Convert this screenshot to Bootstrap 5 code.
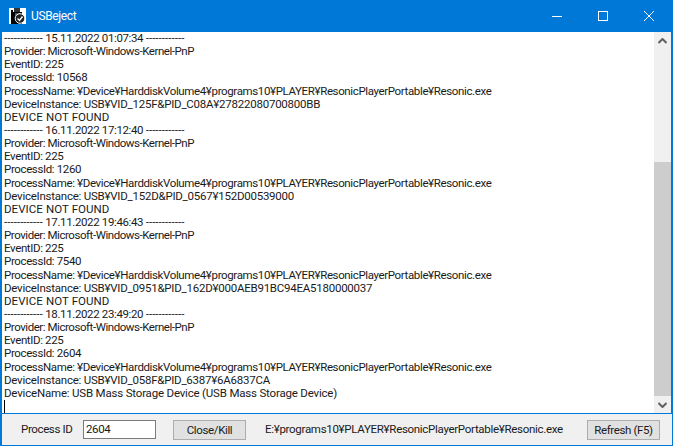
<!DOCTYPE html>
<html><head><meta charset="utf-8">
<link href="https://cdn.jsdelivr.net/npm/bootstrap@5.3.0/dist/css/bootstrap.min.css" rel="stylesheet">
<style>
html,body{margin:0;height:446px;overflow:hidden;background:#0078d7;font-family:Roboto,"Liberation Sans",Arial,sans-serif;}
.app-win{height:446px;width:673px;background:#0078d7;padding:0 2px 1px 2px;color:#1a1a1a;font-size:11.5px;letter-spacing:-.37px;}
.app-title{height:32px;color:#fff;font-size:12px;letter-spacing:-.36px;margin-left:-2px;margin-right:-1px;}
.app-icon{margin-left:9px;margin-right:5px;}
.wctl{width:46px;height:32px;}
.app-body{height:381px;background:#fff;}
.log-text{line-height:13.14px;padding:0 0 0 2px;white-space:pre;}
.dash{letter-spacing:.05px;}
.ln-prov{letter-spacing:-.45px;}
.ln-dev{letter-spacing:-.24px;}
.ln-name{letter-spacing:-.19px;}
.ln-caps{letter-spacing:.07px;}
.sb{width:17px;background:#f0f0f0;}
.sb-arrow{height:17px;}
.sb-space{height:113px;}
.sb-thumb{background:#cdcdcd;}
.app-foot{background:#f0f0f0;border-top:1px solid #0078d7;margin-right:-1px;}
.f-label{margin-left:19px;width:62px;}
.f-input{width:73px;height:19px;border:1px solid #7a7a7a;background:#fff;padding:0 2px;line-height:17px;}
.f-btn{background:#e1e1e1;border:1px solid #adadad;height:20px;width:73px;line-height:18px;text-align:center;}
.f-kill{margin-left:17px;}
.f-path{margin-left:19px;width:322px;white-space:nowrap;letter-spacing:-.3px;}
.caret-bar{display:inline-block;width:1px;height:13px;background:#000;vertical-align:top;}
</style></head><body>
<div class="app-win d-flex flex-column">
 <div class="app-title d-flex align-items-center">
  <svg class="app-icon flex-shrink-0" width="17" height="16" viewBox="0 0 17 16"><rect width="17" height="16" fill="#fff"/><path d="M2 2h2v14h-2z" fill="#000"/><path d="M5 0h6v4h-6z" fill="#333"/><path d="M4 4h9v12h-9z" fill="#000"/><path d="M6 5h5v3h-5z" fill="#555"/><circle cx="11" cy="10.500" r="4.800" fill="#222" stroke="#fff"/><path d="M8.500 10.500l2 2 3-4" fill="none" stroke="#fff" stroke-width="1.400"/></svg>
  <span class="flex-grow-1">USBeject</span>
  <div class="wctl d-flex align-items-center justify-content-center"><svg width="10" height="10"><path d="M0 5.500h10" stroke="#fff"/></svg></div>
  <div class="wctl d-flex align-items-center justify-content-center"><svg width="10" height="10"><rect x=".5" y=".5" width="9" height="9" fill="none" stroke="#fff"/></svg></div>
  <div class="wctl d-flex align-items-center justify-content-center"><svg width="10" height="10"><path d="M0 0l10 10M10 0L0 10" stroke="#fff"/></svg></div>
 </div>
 <div class="app-body d-flex">
  <div class="log-text flex-grow-1 overflow-hidden"><span class="dash">------------</span> 15.11.2022 01:07:34 <span class="dash">------------</span>
<span class="ln-prov">Provider: Microsoft-Windows-Kernel-PnP</span>
EventID: 225
ProcessId: 10568
ProcessName: ¥Device¥HarddiskVolume4¥programs10¥PLAYER¥ResonicPlayerPortable¥Resonic.exe
<span class="ln-dev">DeviceInstance: USB¥VID_125F&amp;PID_C08A¥27822080700800BB</span>
<span class="ln-caps">DEVICE NOT FOUND</span>
<span class="dash">------------</span> 16.11.2022 17:12:40 <span class="dash">------------</span>
<span class="ln-prov">Provider: Microsoft-Windows-Kernel-PnP</span>
EventID: 225
ProcessId: 1260
ProcessName: ¥Device¥HarddiskVolume4¥programs10¥PLAYER¥ResonicPlayerPortable¥Resonic.exe
<span class="ln-dev">DeviceInstance: USB¥VID_152D&amp;PID_0567¥152D00539000</span>
<span class="ln-caps">DEVICE NOT FOUND</span>
<span class="dash">------------</span> 17.11.2022 19:46:43 <span class="dash">------------</span>
<span class="ln-prov">Provider: Microsoft-Windows-Kernel-PnP</span>
EventID: 225
ProcessId: 7540
ProcessName: ¥Device¥HarddiskVolume4¥programs10¥PLAYER¥ResonicPlayerPortable¥Resonic.exe
<span class="ln-dev">DeviceInstance: USB¥VID_0951&amp;PID_162D¥000AEB91BC94EA5180000037</span>
<span class="ln-caps">DEVICE NOT FOUND</span>
<span class="dash">------------</span> 18.11.2022 23:49:20 <span class="dash">------------</span>
<span class="ln-prov">Provider: Microsoft-Windows-Kernel-PnP</span>
EventID: 225
ProcessId: 2604
ProcessName: ¥Device¥HarddiskVolume4¥programs10¥PLAYER¥ResonicPlayerPortable¥Resonic.exe
<span class="ln-dev">DeviceInstance: USB¥VID_058F&amp;PID_6387¥6A6837CA</span>
<span class="ln-name">DeviceName: USB Mass Storage Device (USB Mass Storage Device)</span>
<span class="caret-bar"></span></div>
  <div class="sb d-flex flex-column flex-shrink-0">
   <div class="sb-arrow d-flex align-items-center justify-content-center"><svg width="9" height="6"><path d="M0.500 5L4.500 1l4 4" fill="none" stroke="#606060" stroke-width="2"/></svg></div>
   <div class="sb-space"></div>
   <div class="sb-thumb flex-grow-1"></div>
   <div class="sb-arrow d-flex align-items-center justify-content-center"><svg width="9" height="6"><path d="M0.500 1L4.500 5l4-4" fill="none" stroke="#606060" stroke-width="2"/></svg></div>
  </div>
 </div>
 <div class="app-foot d-flex align-items-center flex-grow-1">
  <div class="f-label">Process ID</div>
  <div class="f-input">2604</div>
  <div class="f-btn f-kill">Close/Kill</div>
  <div class="f-path">E:¥programs10¥PLAYER¥ResonicPlayerPortable¥Resonic.exe</div>
  <div class="f-btn">Refresh (F5)</div>
 </div>
</div>
<script src="https://cdn.jsdelivr.net/npm/bootstrap@5.3.0/dist/js/bootstrap.bundle.min.js"></script>
</body></html>
